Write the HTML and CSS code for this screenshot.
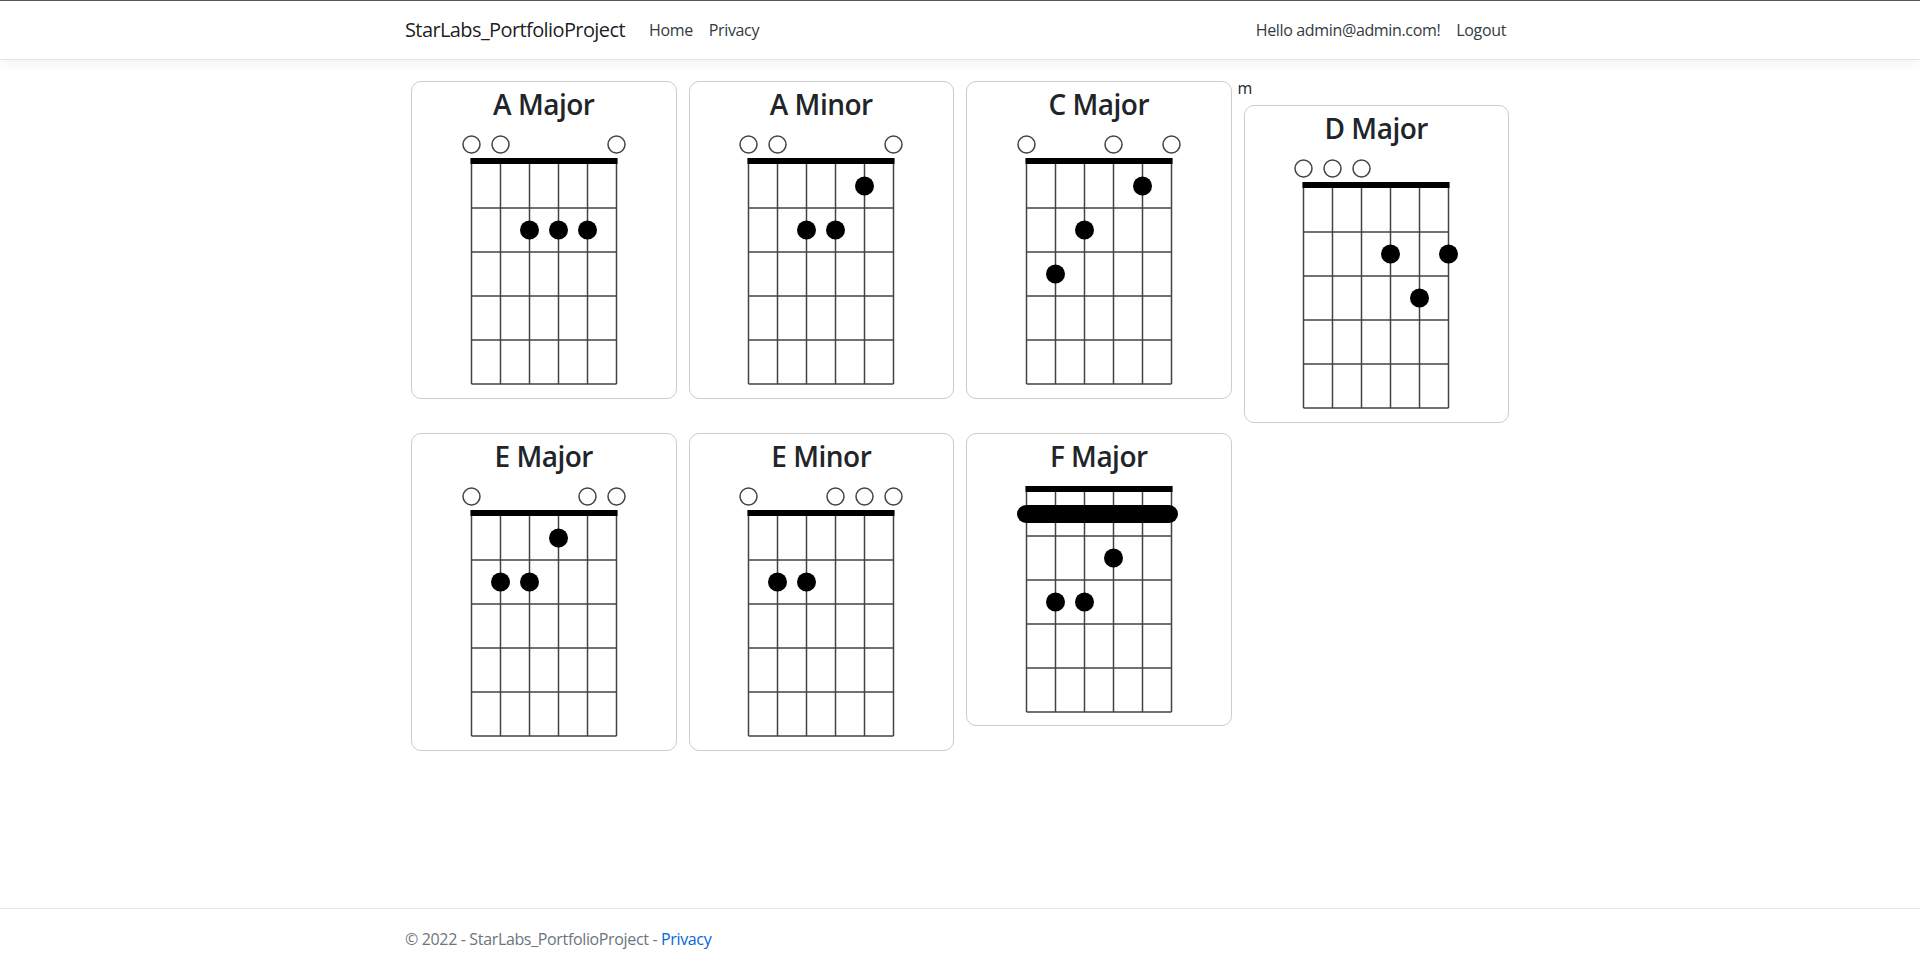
FILE: index.html
```html
<!DOCTYPE html>
<html lang="en">
<head>
<meta charset="utf-8">
<title>StarLabs_PortfolioProject</title>
<link rel="stylesheet" href="styles.css">
</head>
<body>
<header>
  <nav class="navbar">
    <div class="container nav-inner">
      <a class="brand" href="#">StarLabs_PortfolioProject</a>
      <ul class="nav-main">
        <li><a class="nav-link" href="#">Home</a></li>
        <li><a class="nav-link" href="#">Privacy</a></li>
      </ul>
      <ul class="nav-user">
        <li><a class="nav-link" href="#">Hello admin@admin.com!</a></li>
        <li><button class="logout" type="button">Logout</button></li>
      </ul>
    </div>
  </nav>
</header>

<div class="container">
  <main class="chords">
    <div class="col">
      <div class="card">
        <h3>A Major</h3>
        <svg class="diagram" width="180" height="272" viewBox="0 0 180 272">
          <path class="grid" d="M17.5 32V258M46.5 32V258M75.5 32V258M104.5 32V258M133.5 32V258M162.5 32V258M17.5 82H162.5M17.5 126H162.5M17.5 170H162.5M17.5 214H162.5M17.5 258H162.5"/>
          <rect class="nut" x="16.5" y="32" width="147" height="6"/>
          <circle class="open" cx="17.5" cy="18.5" r="8.5"/>
          <circle class="open" cx="46.5" cy="18.5" r="8.5"/>
          <circle class="open" cx="162.5" cy="18.5" r="8.5"/>
          <circle class="dot" cx="75.5" cy="104" r="9.5"/>
          <circle class="dot" cx="104.5" cy="104" r="9.5"/>
          <circle class="dot" cx="133.5" cy="104" r="9.5"/>
        </svg>
      </div>
    </div>
    <div class="col">
      <div class="card">
        <h3>A Minor</h3>
        <svg class="diagram" width="180" height="272" viewBox="0 0 180 272">
          <path class="grid" d="M17.5 32V258M46.5 32V258M75.5 32V258M104.5 32V258M133.5 32V258M162.5 32V258M17.5 82H162.5M17.5 126H162.5M17.5 170H162.5M17.5 214H162.5M17.5 258H162.5"/>
          <rect class="nut" x="16.5" y="32" width="147" height="6"/>
          <circle class="open" cx="17.5" cy="18.5" r="8.5"/>
          <circle class="open" cx="46.5" cy="18.5" r="8.5"/>
          <circle class="open" cx="162.5" cy="18.5" r="8.5"/>
          <circle class="dot" cx="133.5" cy="60" r="9.5"/>
          <circle class="dot" cx="75.5" cy="104" r="9.5"/>
          <circle class="dot" cx="104.5" cy="104" r="9.5"/>
        </svg>
      </div>
    </div>
    <div class="col">
      <div class="card">
        <h3>C Major</h3>
        <svg class="diagram" width="180" height="272" viewBox="0 0 180 272">
          <path class="grid" d="M17.5 32V258M46.5 32V258M75.5 32V258M104.5 32V258M133.5 32V258M162.5 32V258M17.5 82H162.5M17.5 126H162.5M17.5 170H162.5M17.5 214H162.5M17.5 258H162.5"/>
          <rect class="nut" x="16.5" y="32" width="147" height="6"/>
          <circle class="open" cx="17.5" cy="18.5" r="8.5"/>
          <circle class="open" cx="104.5" cy="18.5" r="8.5"/>
          <circle class="open" cx="162.5" cy="18.5" r="8.5"/>
          <circle class="dot" cx="133.5" cy="60" r="9.5"/>
          <circle class="dot" cx="75.5" cy="104" r="9.5"/>
          <circle class="dot" cx="46.5" cy="148" r="9.5"/>
        </svg>
      </div>
    </div>
    <div class="col">
      <span class="stray">m</span>
      <div class="card">
        <h3>D Major</h3>
        <svg class="diagram" width="180" height="272" viewBox="0 0 180 272">
          <path class="grid" d="M17.5 32V258M46.5 32V258M75.5 32V258M104.5 32V258M133.5 32V258M162.5 32V258M17.5 82H162.5M17.5 126H162.5M17.5 170H162.5M17.5 214H162.5M17.5 258H162.5"/>
          <rect class="nut" x="16.5" y="32" width="147" height="6"/>
          <circle class="open" cx="17.5" cy="18.5" r="8.5"/>
          <circle class="open" cx="46.5" cy="18.5" r="8.5"/>
          <circle class="open" cx="75.5" cy="18.5" r="8.5"/>
          <circle class="dot" cx="104.5" cy="104" r="9.5"/>
          <circle class="dot" cx="162.5" cy="104" r="9.5"/>
          <circle class="dot" cx="133.5" cy="148" r="9.5"/>
        </svg>
      </div>
    </div>
    <div class="col">
      <div class="card">
        <h3>E Major</h3>
        <svg class="diagram" width="180" height="272" viewBox="0 0 180 272">
          <path class="grid" d="M17.5 32V258M46.5 32V258M75.5 32V258M104.5 32V258M133.5 32V258M162.5 32V258M17.5 82H162.5M17.5 126H162.5M17.5 170H162.5M17.5 214H162.5M17.5 258H162.5"/>
          <rect class="nut" x="16.5" y="32" width="147" height="6"/>
          <circle class="open" cx="17.5" cy="18.5" r="8.5"/>
          <circle class="open" cx="133.5" cy="18.5" r="8.5"/>
          <circle class="open" cx="162.5" cy="18.5" r="8.5"/>
          <circle class="dot" cx="104.5" cy="60" r="9.5"/>
          <circle class="dot" cx="46.5" cy="104" r="9.5"/>
          <circle class="dot" cx="75.5" cy="104" r="9.5"/>
        </svg>
      </div>
    </div>
    <div class="col">
      <div class="card">
        <h3>E Minor</h3>
        <svg class="diagram" width="180" height="272" viewBox="0 0 180 272">
          <path class="grid" d="M17.5 32V258M46.5 32V258M75.5 32V258M104.5 32V258M133.5 32V258M162.5 32V258M17.5 82H162.5M17.5 126H162.5M17.5 170H162.5M17.5 214H162.5M17.5 258H162.5"/>
          <rect class="nut" x="16.5" y="32" width="147" height="6"/>
          <circle class="open" cx="17.5" cy="18.5" r="8.5"/>
          <circle class="open" cx="104.5" cy="18.5" r="8.5"/>
          <circle class="open" cx="133.5" cy="18.5" r="8.5"/>
          <circle class="open" cx="162.5" cy="18.5" r="8.5"/>
          <circle class="dot" cx="46.5" cy="104" r="9.5"/>
          <circle class="dot" cx="75.5" cy="104" r="9.5"/>
        </svg>
      </div>
    </div>
    <div class="col">
      <div class="card">
        <h3>F Major</h3>
        <svg class="diagram" width="180" height="247" viewBox="0 0 180 247">
          <path class="grid" d="M17.5 8V234M46.5 8V234M75.5 8V234M104.5 8V234M133.5 8V234M162.5 8V234M17.5 58H162.5M17.5 102H162.5M17.5 146H162.5M17.5 190H162.5M17.5 234H162.5"/>
          <rect class="nut" x="16.5" y="8" width="147" height="6"/>
          <rect class="dot" x="8" y="27" width="161" height="18" rx="9"/>
          <circle class="dot" cx="104.5" cy="80" r="9.5"/>
          <circle class="dot" cx="46.5" cy="124" r="9.5"/>
          <circle class="dot" cx="75.5" cy="124" r="9.5"/>
        </svg>
      </div>
    </div>
  </main>
</div>

<footer>
  <div class="container">&copy; 2022 - StarLabs_PortfolioProject - <a href="#">Privacy</a></div>
</footer>
</body>
</html>
```

FILE: styles.css
```css
* {
  box-sizing: border-box;
}

html,
body {
  margin: 0;
}

body {
  font-family: "Open Sans", "Noto Sans", sans-serif;
  font-size: 16px;
  line-height: 1.5;
  letter-spacing: -0.35px;
  color: #212529;
  background: #fff;
  border-top: 1px solid #555;
  min-height: 100vh;
  display: flex;
  flex-direction: column;
}

.container {
  width: 1140px;
  padding: 0 15px;
  margin: 0 auto;
}

.navbar {
  background: #fff;
  border-bottom: 1px solid #e5e5e5;
  box-shadow: 0 4px 12px rgba(0, 0, 0, 0.05);
  margin-bottom: 16px;
  height: 59px;
}

.nav-inner {
  display: flex;
  align-items: center;
  height: 100%;
}

.brand {
  font-size: 20px;
  line-height: 30px;
  letter-spacing: -0.6px;
  color: rgba(0, 0, 0, 0.9);
  text-decoration: none;
  margin-right: 16px;
}

.nav-main,
.nav-user {
  list-style: none;
  margin: 0;
  padding: 0;
  display: flex;
  align-items: center;
}

.nav-main {
  flex: 1;
}

.nav-link {
  display: block;
  padding: 8px;
  color: #343a40;
  text-decoration: none;
}

.logout {
  font: inherit;
  letter-spacing: inherit;
  color: #343a40;
  background: none;
  border: 0;
  padding: 6px 9px 6px 8px;
}

.chords {
  display: flex;
  flex-wrap: wrap;
  align-items: flex-start;
  padding-bottom: 16px;
}

.col {
  width: 25%;
}

.stray {
  display: block;
  line-height: 24px;
}

.card {
  margin: 5px 6px;
  border: 1px solid #ccc;
  border-radius: 10px;
  background: #fff;
  display: flex;
  flex-direction: column;
  align-items: center;
}

.card h3 {
  margin: 0;
  height: 44px;
  line-height: 44px;
  font-size: 28px;
  font-weight: 600;
  letter-spacing: -0.5px;
}

.diagram {
  display: block;
}

.grid {
  fill: none;
  stroke: #444;
  stroke-width: 1.5;
}

.nut {
  fill: #000;
}

.open {
  fill: #fff;
  stroke: #444;
  stroke-width: 1.5;
}

.dot {
  fill: #000;
}

footer {
  margin-top: auto;
  border-top: 1px solid #e5e5e5;
  line-height: 60px;
  color: #6c757d;
}

footer a {
  color: #0366d6;
  text-decoration: none;
}
```
